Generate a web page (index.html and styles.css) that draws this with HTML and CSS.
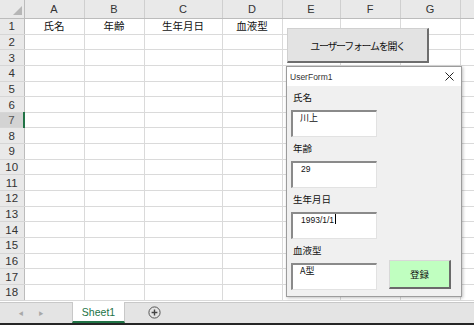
FILE: index.html
```
<!DOCTYPE html>
<html lang="ja">
<head>
    <meta charset="UTF-8">
    <title>UserForm1</title>
    <link rel="stylesheet" href="styles.css">
</head>
<body>
<div class="screen">
    <table class="sheet">
        <colgroup>
            <col class="c-hd"><col class="c-60"><col class="c-60"><col class="c-78"><col class="c-60"><col class="c-58"><col class="c-60"><col class="c-60"><col class="c-rest">
        </colgroup>
        <thead>
            <tr><th class="corner"><span class="tri"></span></th><th>A</th><th>B</th><th>C</th><th>D</th><th>E</th><th>F</th><th>G</th><th></th></tr>
        </thead>
        <tbody>
            <tr><th>1</th><td class="jp">氏名</td><td class="jp">年齢</td><td class="jp">生年月日</td><td class="jp">血液型</td><td></td><td></td><td></td><td></td></tr>
            <tr><th>2</th><td></td><td></td><td></td><td></td><td></td><td></td><td></td><td></td></tr>
            <tr><th>3</th><td></td><td></td><td></td><td></td><td></td><td></td><td></td><td></td></tr>
            <tr><th>4</th><td></td><td></td><td></td><td></td><td></td><td></td><td></td><td></td></tr>
            <tr><th>5</th><td></td><td></td><td></td><td></td><td></td><td></td><td></td><td></td></tr>
            <tr><th>6</th><td></td><td></td><td></td><td></td><td></td><td></td><td></td><td></td></tr>
            <tr><th class="sel">7</th><td></td><td></td><td></td><td></td><td></td><td></td><td></td><td></td></tr>
            <tr><th>8</th><td></td><td></td><td></td><td></td><td></td><td></td><td></td><td></td></tr>
            <tr><th>9</th><td></td><td></td><td></td><td></td><td></td><td></td><td></td><td></td></tr>
            <tr><th>10</th><td></td><td></td><td></td><td></td><td></td><td></td><td></td><td></td></tr>
            <tr><th>11</th><td></td><td></td><td></td><td></td><td></td><td></td><td></td><td></td></tr>
            <tr><th>12</th><td></td><td></td><td></td><td></td><td></td><td></td><td></td><td></td></tr>
            <tr><th>13</th><td></td><td></td><td></td><td></td><td></td><td></td><td></td><td></td></tr>
            <tr><th>14</th><td></td><td></td><td></td><td></td><td></td><td></td><td></td><td></td></tr>
            <tr><th>15</th><td></td><td></td><td></td><td></td><td></td><td></td><td></td><td></td></tr>
            <tr><th>16</th><td></td><td></td><td></td><td></td><td></td><td></td><td></td><td></td></tr>
            <tr><th>17</th><td></td><td></td><td></td><td></td><td></td><td></td><td></td><td></td></tr>
            <tr><th>18</th><td></td><td></td><td></td><td></td><td></td><td></td><td></td><td></td></tr>
        </tbody>
    </table>

    <div class="tabbar">
        <span class="nav">&#9664;</span>
        <span class="nav">&#9654;</span>
        <span class="tab">Sheet1</span>
        <span class="add">
            <svg width="13" height="13" viewBox="0 0 13 13">
                <circle cx="6.5" cy="6.5" r="5.6" fill="none" stroke="#555" stroke-width="1"/>
                <path d="M6.5 3.6v5.8M3.6 6.5h5.8" stroke="#444" stroke-width="1.4"/>
            </svg>
        </span>
    </div>
    <div class="taskbar"></div>

    <!-- botones y formulario encima de la hoja -->
    <button class="open-btn" type="button">ユーザーフォームを開く</button>

    <div class="userform">
        <div class="uf-title">
            <span>UserForm1</span>
            <svg class="uf-close" width="9" height="9" viewBox="0 0 9 9">
                <path d="M0.5 0.5l8 8M8.5 0.5l-8 8" stroke="#222" stroke-width="1"/>
            </svg>
        </div>
        <div class="uf-body">
            <div class="field-label">氏名</div>
            <div class="textbox">川上</div>

            <div class="field-label">年齢</div>
            <div class="textbox num">29</div>

            <div class="field-label">生年月日</div>
            <div class="textbox num">1993/1/1<span class="caret"></span></div>

            <div class="field-label">血液型</div>
            <div class="last-row">
                <div class="textbox">A型</div>
                <button class="save-btn" type="button">登録</button>
            </div>
        </div>
    </div>
</div>
</body>
</html>
```

FILE: styles.css
```
/* General */
body {
    margin: 0;
    background-color: #ffffff;
    font-family: "Liberation Sans", "Noto Sans CJK JP", sans-serif;
}

.screen {
    position: relative;
    width: 474px;
    height: 325px;
    overflow: hidden;
}

/* Hoja de cálculo */
.sheet {
    width: 474px;
    border-collapse: collapse;
    table-layout: fixed;
}

.c-hd { width: 24px; }
.c-60 { width: 60px; }
.c-78 { width: 78px; }
.c-58 { width: 58px; }
.c-rest { width: 14px; }

.sheet thead th {
    height: 18px;
    padding: 0;
    background-color: #e9e9e9;
    border-right: 1px solid #cfcfcf;
    border-bottom: 1px solid #bcbcbc;
    font-weight: normal;
    font-size: 11px;
    color: #333;
    text-align: center;
}

.sheet thead th.corner {
    position: relative;
    border-right: 1px solid #bcbcbc;
}

.tri {
    position: absolute;
    right: 2px;
    bottom: 3px;
    width: 0;
    height: 0;
    border-left: 9px solid transparent;
    border-bottom: 9px solid #b6b6b6;
}

.sheet tbody tr {
    height: 15.65px;
}

.sheet tbody th {
    padding: 0;
    background-color: #e9e9e9;
    border-right: 1px solid #bcbcbc;
    border-bottom: 1px solid #d6d6d6;
    font-weight: normal;
    font-size: 11.5px;
    color: #333;
    text-align: center;
    line-height: 14px;
}

.sheet tbody th.sel {
    background-color: #d3d3d3;
    color: #555;
    border-right: 2px solid #217346;
}

.sheet td {
    padding: 0;
    border-right: 1px solid #dadada;
    border-bottom: 1px solid #dadada;
    line-height: 14px;
}

.sheet td.jp {
    font-family: "Noto Sans CJK JP", sans-serif;
    font-size: 10.5px;
    color: #111;
    text-align: center;
}

/* Barra de hojas */
.tabbar {
    display: flex;
    align-items: stretch;
    height: 20px;
    margin-top: 1px;
    background-color: #e4e4e4;
    border-top: 1px solid #c8c8c8;
}

.nav {
    width: 20px;
    font-size: 5px;
    color: #a8a8a8;
    text-align: center;
    line-height: 20px;
}

.nav:first-child {
    margin-left: 11px;
}

.tab {
    width: 53px;
    margin-left: 21px;
    margin-top: -1px;
    background-color: #ffffff;
    border-left: 1px solid #c8c8c8;
    border-right: 1px solid #c8c8c8;
    border-bottom: 2px solid #217346;
    box-sizing: border-box;
    font-size: 10.5px;
    color: #217346;
    text-align: center;
    line-height: 21px;
}

.add {
    display: flex;
    align-items: center;
    margin-left: 23px;
}

.taskbar {
    height: 4px;
    background-color: #262626;
}

/* Botón para abrir el formulario */
.open-btn {
    position: absolute;
    left: 287px;
    top: 28px;
    width: 142px;
    height: 35px;
    padding: 0;
    background-color: #e3e3e3;
    border: 1px solid #d0d0d0;
    border-right: 2px solid #6e6e6e;
    border-bottom: 2px solid #6e6e6e;
    font-family: "Noto Sans CJK JP", sans-serif;
    font-size: 10px;
    letter-spacing: -1.3px;
    color: #111;
}

/* UserForm */
.userform {
    position: absolute;
    left: 286px;
    top: 66px;
    width: 176px;
    height: 231px;
    box-sizing: border-box;
    background-color: #f0f0f0;
    border: 1px solid #9c9c9c;
    box-shadow: 1px 1px 3px rgba(0, 0, 0, 0.25);
}

.uf-title {
    display: flex;
    align-items: center;
    justify-content: space-between;
    height: 19px;
    padding: 0 7px 0 3px;
    background-color: #ffffff;
    font-size: 8.5px;
    color: #333;
}

.uf-body {
    padding: 4px 0 0 4px;
}

.field-label {
    height: 14px;
    margin: 0 0 6px 2px;
    font-family: "Noto Sans CJK JP", sans-serif;
    font-size: 9.5px;
    line-height: 14px;
    color: #111;
}

.textbox {
    width: 86px;
    height: 27px;
    margin-bottom: 4px;
    box-sizing: border-box;
    padding: 0 0 0 7px;
    background-color: #ffffff;
    border-top: 2px solid #8a8a8a;
    border-left: 2px solid #8a8a8a;
    border-right: 1px solid #e2e2e2;
    border-bottom: 1px solid #e2e2e2;
    font-family: "Noto Sans CJK JP", sans-serif;
    font-size: 9px;
    line-height: 12px;
    color: #111;
}

.textbox.num {
    font-family: "Liberation Sans Narrow", "Liberation Sans", sans-serif;
    font-size: 8.5px;
    padding-left: 8px;
}

.caret {
    display: inline-block;
    width: 1px;
    height: 10px;
    margin-left: 1px;
    vertical-align: -1px;
    background-color: #000;
}

.last-row {
    display: flex;
    align-items: flex-start;
    gap: 12px;
}

.save-btn {
    width: 62px;
    height: 29px;
    margin-top: -3px;
    padding: 0;
    background-color: #c0ffc0;
    border: 1px solid #d8d8d8;
    border-right: 2px solid #6a6a6a;
    border-bottom: 2px solid #6a6a6a;
    font-family: "Noto Sans CJK JP", sans-serif;
    font-size: 9.5px;
    color: #111;
}
```
